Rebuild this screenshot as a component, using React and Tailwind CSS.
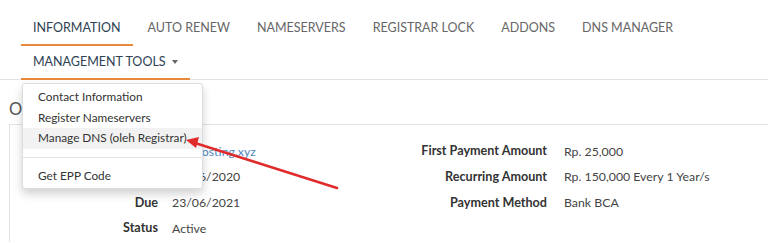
import { useState } from "react";

const tabsTop = ["INFORMATION", "AUTO RENEW", "NAMESERVERS", "REGISTRAR LOCK", "ADDONS", "DNS MANAGER"];

const menuItems = ["Contact Information", "Register Nameservers", "Manage DNS (oleh Registrar)"];

const leftRows = [
  ["Domain", "webhosting.xyz", true],
  ["Registration Date", "23/06/2020"],
  ["Due", "23/06/2021"],
  ["Status", "Active"],
];

const rightRows = [
  ["First Payment Amount", "Rp. 25,000"],
  ["Recurring Amount", "Rp. 150,000 Every 1 Year/s"],
  ["Payment Method", "Bank BCA"],
];

const Tab = ({ label, active, caret }) => (
  <div
    className={
      "h-[34px] px-3 mx-[1.5px] flex items-center text-[12.5px] border-b-2 " +
      (active ? "border-[#e88a3c] text-[#2e4253]" : "border-transparent text-[#666]")
    }
  >
    {label}
    {caret && <span className="ml-[6px] mb-[1px] border-x-[3.5px] border-x-transparent border-t-[4px] border-t-[#666]"></span>}
  </div>
);

export default function App() {
  const [hover] = useState(2);

  return (
    <div className="relative w-[768px] h-[243px] overflow-hidden bg-white font-['Lato','Liberation_Sans',sans-serif] text-[12.3px] text-[#444]">
      {/* tabs */}
      <div className="pt-3 border-b border-[#e3e3e3]">
        <div className="flex pl-[19.5px]">
          {tabsTop.map((t, i) => (
            <Tab key={t} label={t} active={i === 0} />
          ))}
        </div>
        <div className="flex pl-[19.5px] -mb-px">
          <Tab label="MANAGEMENT TOOLS" active caret />
        </div>
      </div>

      {/* overview */}
      <div className="pl-[9px]">
        <h3 className="text-[16.5px] text-[#555] h-[44px] flex items-center pt-[14px]">OVERVIEW</h3>
        <div className="border-l border-t border-[#e3e3e3] pt-[14px] flex">
          <div className="w-[380px]">
            {leftRows.map(([l, v, link]) => (
              <div key={l} className="flex h-[25.7px] items-center">
                <div className="w-[148px] text-right font-bold text-[12.6px] text-[#333]">{l}</div>
                <div className={"ml-[14px] " + (link ? "text-[#4f86c0]" : "text-[#444]")}>{v}</div>
              </div>
            ))}
          </div>
          <div>
            {rightRows.map(([l, v]) => (
              <div key={l} className="flex h-[25.7px] items-center">
                <div className="w-[157px] text-right font-bold text-[12.6px] text-[#333]">{l}</div>
                <div className="ml-[17px] text-[#444]">{v}</div>
              </div>
            ))}
          </div>
        </div>
      </div>

      {/* dropdown */}
      <div className="absolute left-[22px] top-[83px] w-[181px] bg-white border border-[#ddd] rounded-[3px] shadow-[0_5px_10px_rgba(0,0,0,0.18)] pt-[3px] pb-[2px] text-[11.8px] text-[#333]">
        {menuItems.map((m, i) => (
          <div key={m} className={"h-[20.5px] leading-[20.5px] pl-[15px] " + (i === hover ? "bg-[#f2f2f2]" : "")}>
            {m}
          </div>
        ))}
        <div className="my-[8px] h-px bg-[#e5e5e5]"></div>
        <div className="h-[20.5px] leading-[20.5px] pl-[15px]">Get EPP Code</div>
      </div>

      {/* arrow */}
      <svg className="absolute left-0 top-0 pointer-events-none" width="768" height="243">
        <line x1="337" y1="188" x2="195" y2="143" stroke="#e02b2b" strokeWidth="2.5" strokeLinecap="round" />
        <polygon points="186,140 199,137 196,148" fill="#e02b2b" />
      </svg>
    </div>
  );
}
